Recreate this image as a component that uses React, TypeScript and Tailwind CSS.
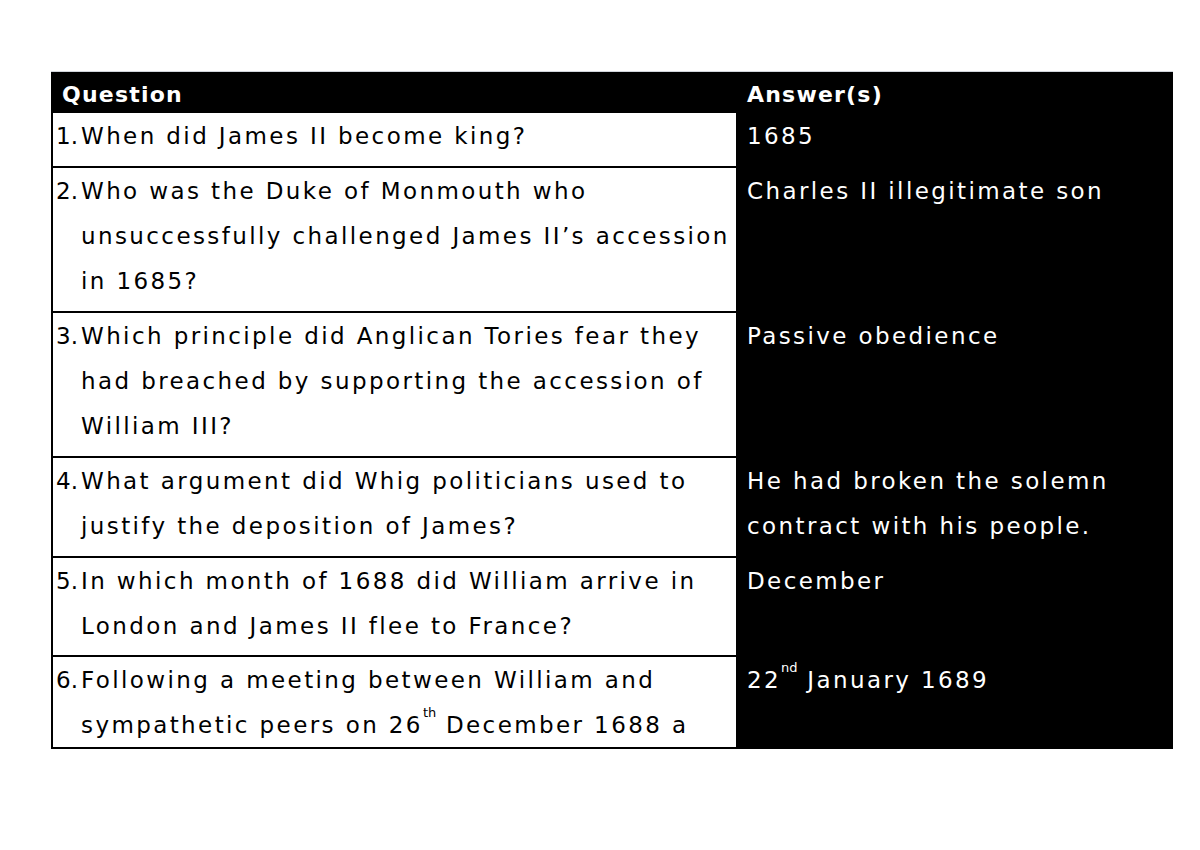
import React from 'react';

type Row = {
  num: string;
  lines: React.ReactNode[];
  answer: React.ReactNode[];
  height: string;
};

const rows: Row[] = [
  { num: '1.', lines: ['When did James II become king?'], answer: ['1685'], height: 'h-[55px]' },
  {
    num: '2.',
    lines: ['Who was the Duke of Monmouth who', 'unsuccessfully challenged James II’s accession', 'in 1685?'],
    answer: ['Charles II illegitimate son'],
    height: 'h-[145px]',
  },
  {
    num: '3.',
    lines: ['Which principle did Anglican Tories fear they', 'had breached by supporting the accession of', 'William III?'],
    answer: ['Passive obedience'],
    height: 'h-[145px]',
  },
  {
    num: '4.',
    lines: ['What argument did Whig politicians used to', 'justify the deposition of James?'],
    answer: ['He had broken the solemn', 'contract with his people.'],
    height: 'h-[100px]',
  },
  {
    num: '5.',
    lines: ['In which month of 1688 did William arrive in', 'London and James II flee to France?'],
    answer: ['December'],
    height: 'h-[99px]',
  },
  {
    num: '6.',
    lines: [
      'Following a meeting between William and',
      <>sympathetic peers on 26<sup className="text-[13px] tracking-normal align-[10px]">th</sup> December 1688 a</>,
    ],
    answer: [<>22<sup className="text-[13px] tracking-normal align-[10px]">nd</sup> January 1689</>],
    height: 'h-[92px]',
  },
];

const font = "font-['DejaVu_Sans','Liberation_Sans',sans-serif]";

export default function App() {
  return (
    <div className={`w-[1200px] h-[850px] bg-white pt-[71px] pl-[51px] ${font}`}>
      <div className="w-[1122px] flex flex-col">
        <div className="flex h-[42px] bg-black border-t border-gray-300 text-white font-bold text-[22px] leading-[40px] pt-[3px] tracking-[1.2px]">
          <div className="w-[686px] pl-[11px]">Question</div>
          <div className="flex-1 pl-[10px]">Answer(s)</div>
        </div>
        {rows.map((r, i) => (
          <div key={i} className={`flex ${r.height} overflow-hidden`}>
            <div className="w-[686px] border-l-2 border-r border-b-2 border-black bg-white pl-[3px] pt-[1px] text-[23px] leading-[45px] text-black tracking-[2.4px]">
              {r.lines.map((l, j) => (
                <div key={j} className="flex whitespace-nowrap">
                  <span className="w-[25px] shrink-0 tracking-normal">{j === 0 ? r.num : ''}</span>
                  <span>{l}</span>
                </div>
              ))}
            </div>
            <div className="flex-1 bg-black text-white pl-[10px] pt-[1px] text-[23px] leading-[45px] tracking-[2.4px]">
              {r.answer.map((a, j) => (
                <div key={j} className="whitespace-nowrap">{a}</div>
              ))}
            </div>
          </div>
        ))}
      </div>
    </div>
  );
}
